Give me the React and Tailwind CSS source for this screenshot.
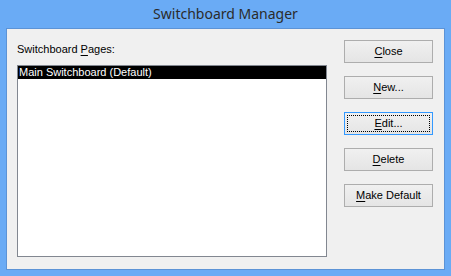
const ui = { fontFamily: '"Liberation Sans", Arial, sans-serif' };

const Btn = ({ children, focused }) => (
  <div
    className={`relative h-[23px] w-[89px] border ${
      focused ? 'border-[#3399ff]' : 'border-[#adadad]'
    } bg-gradient-to-b from-[#f0f0f0] to-[#e5e5e5] flex items-center justify-center text-[11px] text-black`}
  >
    {focused && (
      <div className="absolute inset-[2px] border border-dotted border-black"></div>
    )}
    <span className="relative">{children}</span>
  </div>
);

const U = ({ children }) => <span className="underline underline-offset-[1.5px]">{children}</span>;

export default function App() {
  return (
    <div
      className="w-[451px] h-[276px] bg-[#6aabf5] flex flex-col px-[6px] pb-[6px]"
      style={ui}
    >
      {/* Title bar */}
      <div
        className="h-[28px] flex items-center justify-center text-[14px] text-[#2b2b2b] pb-[2px]"
        style={{ fontFamily: '"Noto Sans", "Open Sans", sans-serif' }}
      >
        Switchboard Manager
      </div>

      {/* Client area */}
      <div className="flex-1 bg-[#f0f0f0] border border-[#5c93d6] flex pl-[10px] pt-[13px]">
        <div className="flex flex-col w-[310px]">
          <div className="text-[11px] text-black h-[14px] leading-[14px]">
            Switchboard <U>P</U>ages:
          </div>
          <div className="mt-[9px] h-[192px] bg-white border border-[#828790] p-0">
            <div className="h-[13px] bg-black text-white text-[11px] leading-[13px] pl-[1px]">
              Main Switchboard (Default)
            </div>
          </div>
        </div>

        <div className="ml-[17px] flex flex-col gap-[13px] -mt-[2px]">
          <Btn><U>C</U>lose</Btn>
          <Btn><U>N</U>ew...</Btn>
          <Btn focused><U>E</U>dit...</Btn>
          <Btn><U>D</U>elete</Btn>
          <Btn><U>M</U>ake Default</Btn>
        </div>
      </div>
    </div>
  );
}
